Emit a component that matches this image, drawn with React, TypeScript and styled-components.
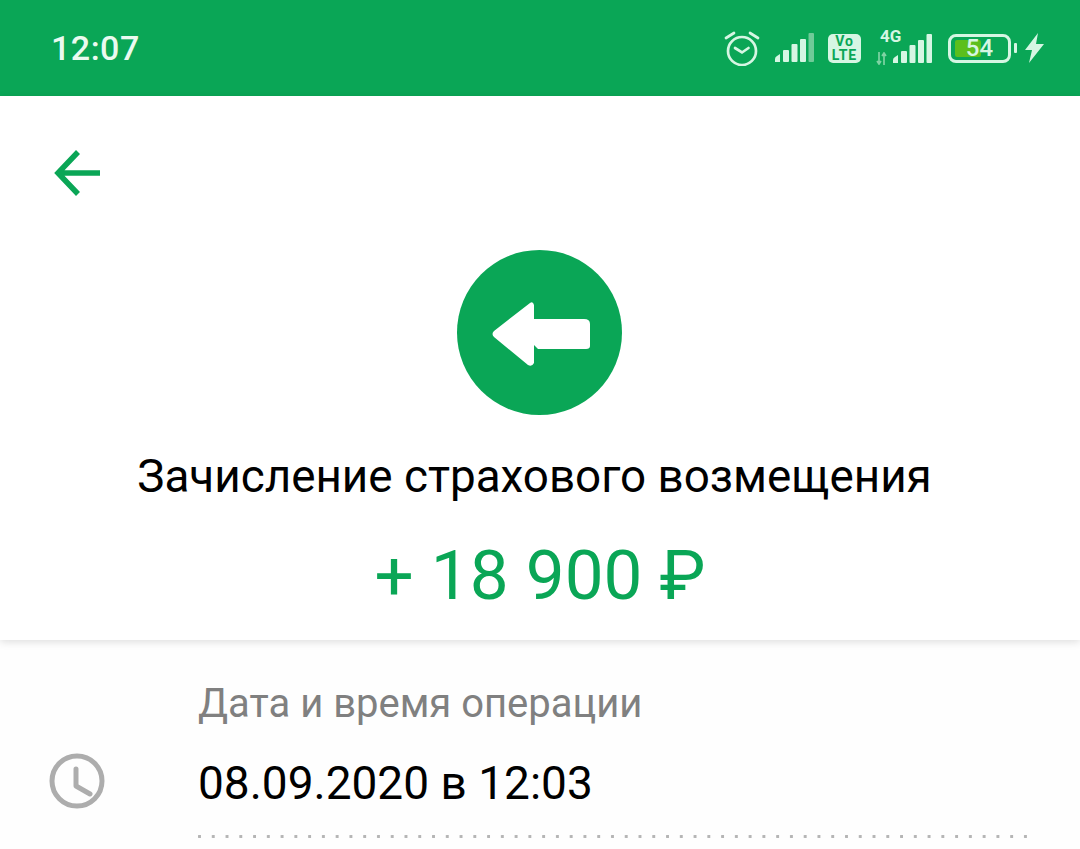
import styled, { createGlobalStyle } from 'styled-components';

const GREEN = '#0aa656';
const LIGHT = '#d6f6e3';

const GlobalStyle = createGlobalStyle`
  html, body {
    margin: 0;
    padding: 0;
    background: #fefefe;
    font-family: Roboto, "Noto Sans", sans-serif;
  }
  * { box-sizing: border-box; }
`;

const Page = styled.div`
  width: 1080px;
  height: 849px;
  overflow: hidden;
  display: flex;
  flex-direction: column;
`;

const StatusBar = styled.header`
  height: 96px;
  flex: none;
  background: ${GREEN};
  display: flex;
  align-items: center;
  justify-content: space-between;
  padding: 0 36px 0 51px;
`;

const Clock = styled.span`
  color: #eafaf0;
  font-size: 34px;
  font-weight: 500;
  letter-spacing: 0.5px;
`;

const StatusIcons = styled.div`
  display: flex;
  align-items: center;
`;

const AlarmIcon = styled.svg`
  margin-right: 14px;
`;

const VoLte = styled.div`
  width: 33px;
  height: 29px;
  margin: 0 14px;
  border-radius: 5px;
  background: ${LIGHT};
  color: ${GREEN};
  display: flex;
  flex-direction: column;
  align-items: center;
  justify-content: center;
  font-size: 14px;
  line-height: 14px;
  font-weight: 700;
  letter-spacing: 0.9px;
`;

const NetworkStack = styled.div`
  position: relative;
  width: 57px;
  height: 34px;
  margin-right: 16px;
`;

const FourG = styled.span`
  position: absolute;
  left: 5px;
  top: -5px;
  color: ${LIGHT};
  font-size: 17px;
  line-height: 20px;
  font-weight: 700;
`;

const DataArrows = styled.svg`
  position: absolute;
  left: 1px;
  bottom: 0;
`;

const NetworkBars = styled.div`
  position: absolute;
  right: 0;
  bottom: 1px;
  display: flex;
`;

const Battery = styled.div`
  position: relative;
  width: 63px;
  height: 29px;
  border: 3.5px solid ${LIGHT};
  border-radius: 8px;
  display: flex;
  align-items: center;
  justify-content: center;
  color: ${LIGHT};
  font-size: 24px;
  font-weight: 500;
`;

const BatteryFill = styled.div`
  position: absolute;
  left: 4px;
  top: 3px;
  bottom: 3px;
  border-radius: 2px;
  background: #5cbf1c;
`;

const BatteryLabel = styled.span`
  position: relative;
`;

const BatteryTip = styled.div`
  width: 3px;
  height: 10px;
  margin: 0 7px 0 3px;
  border-radius: 1px;
  background: ${LIGHT};
`;

const Hero = styled.section`
  position: relative;
  height: 544px;
  flex: none;
  background: #fff;
  box-shadow: 0 2px 8px rgba(0, 0, 0, 0.13);
  display: flex;
  flex-direction: column;
  align-items: center;
`;

const BackRow = styled.div`
  align-self: stretch;
  height: 154px;
  padding: 54px 0 0 53px;
  display: flex;
  align-items: flex-start;
`;

const Round = styled.div`
  width: 165px;
  height: 165px;
  margin-right: 1px;
  border-radius: 50%;
  background: ${GREEN};
  display: flex;
  align-items: center;
  justify-content: center;
`;

const ArrowGlyph = styled.svg`
  margin: 2px 0 0 3px;
`;

const Title = styled.h1`
  margin: 38px 11px 0 0;
  font-size: 45.8px;
  line-height: 48px;
  font-weight: 400;
  color: #000;
`;

const Amount = styled.div`
  margin-top: 34px;
  font-size: 69.2px;
  line-height: 82px;
  font-weight: 400;
  color: ${GREEN};
`;

const Details = styled.section`
  flex: 1;
  display: grid;
  grid-template-columns: 198px 1fr;
  padding-top: 41px;
`;

const IconCell = styled.div`
  padding: 72px 0 0 49px;
`;

const Info = styled.div`
  display: flex;
  flex-direction: column;
  padding-right: 50px;
`;

const Label = styled.div`
  font-size: 40px;
  line-height: 46px;
  color: #808080;
`;

const Value = styled.div`
  margin-top: 32px;
  font-size: 46px;
  line-height: 48px;
  color: #000;
`;

const Dots = styled.div`
  margin-top: 28px;
  height: 3px;
  background-image: radial-gradient(circle at 1.5px 1.5px, #b5b5b5 1.4px, transparent 1.6px);
  background-size: 13.77px 3px;
  background-repeat: repeat-x;
`;

const SignalBars = ({ dimLast }: { dimLast?: boolean }) => (
  <svg width="40" height="30" viewBox="0 0 40 30">
    <path d="M1 29v-3q0-2 2-3l3-2v8z" fill={LIGHT} />
    <rect x="9" y="17" width="6" height="12" rx="1" fill={LIGHT} />
    <rect x="17.5" y="11" width="6" height="18" rx="1" fill={LIGHT} />
    <rect x="26" y="6" width="6" height="23" rx="1" fill={LIGHT} />
    <rect x="34.5" y="0" width="5.5" height="29" rx="1" fill={dimLast ? '#6fcb98' : LIGHT} />
  </svg>
);

export default function App() {
  return (
    <Page>
      <GlobalStyle />
      <StatusBar>
        <Clock>12:07</Clock>
        <StatusIcons>
          <AlarmIcon width="36" height="36" viewBox="0 0 36 36" fill="none" stroke={LIGHT} strokeWidth="2.7" strokeLinecap="round">
            <circle cx="18" cy="21" r="14" />
            <path d="M11 18l7 4.5 6.5-4.5" />
            <path d="M2 8l8-5M34 8l-8-5" />
          </AlarmIcon>
          <SignalBars dimLast />
          <VoLte>
            <span>Vo</span>
            <span>LTE</span>
          </VoLte>
          <NetworkStack>
            <FourG>4G</FourG>
            <DataArrows width="11" height="13" viewBox="0 0 11 13" fill="none" stroke="#7ed3a3" strokeWidth="1.7">
              <path d="M3 0v12M1 9l2 3 2-3M8 13V1M6 4l2-3 2 3" />
            </DataArrows>
            <NetworkBars>
              <SignalBars />
            </NetworkBars>
          </NetworkStack>
          <Battery>
            <BatteryFill style={{ width: '46%' }} />
            <BatteryLabel>54</BatteryLabel>
          </Battery>
          <BatteryTip />
          <svg width="20" height="30" viewBox="0 0 20 30">
            <path d="M14 0L1 17h7L5 30 20 11h-8z" fill={LIGHT} />
          </svg>
        </StatusIcons>
      </StatusBar>
      <Hero>
        <BackRow>
          <svg width="48" height="46" viewBox="0 0 48 46" fill="none" stroke={GREEN} strokeWidth="5.5">
            <path d="M25 2L5 23l20 21M5 23h42" />
          </svg>
        </BackRow>
        <Round>
          <ArrowGlyph width="98" height="66" viewBox="0 0 98 66">
            <path
              d="M38 2Q41 0 42 4V18H92Q98 18 98 23V45Q98 48 94 48H46L42 44V62Q40 66 36 64L2 36Q-1 33 2 30Z"
              fill="#fff"
            />
          </ArrowGlyph>
        </Round>
        <Title>Зачисление страхового возмещения</Title>
        <Amount>+ 18 900 ₽</Amount>
      </Hero>
      <Details>
        <IconCell>
          <svg width="56" height="56" viewBox="0 0 56 56" fill="none" stroke="#adadad" strokeWidth="5" strokeLinecap="round">
            <circle cx="28" cy="28" r="25" />
            <path d="M27 16v17l14 8" strokeLinejoin="round" />
          </svg>
        </IconCell>
        <Info>
          <Label>Дата и время операции</Label>
          <Value>08.09.2020 в 12:03</Value>
          <Dots />
        </Info>
      </Details>
    </Page>
  );
}
